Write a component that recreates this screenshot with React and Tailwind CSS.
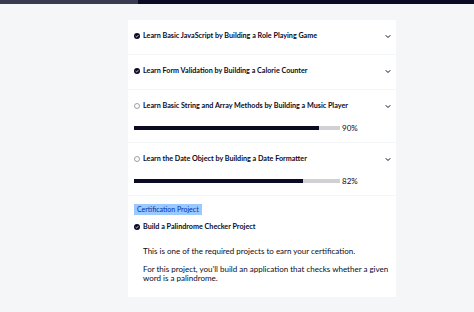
import React from "react";

const Check = () => (
  <svg width="6" height="6" viewBox="0 0 12 12" className="shrink-0">
    <circle cx="6" cy="6" r="6" fill="#0a0a23" />
    <path d="M3.2 6.2 L5.2 8.1 L8.8 4.2" stroke="#fff" strokeWidth="1.6" fill="none" />
  </svg>
);

const Open = () => (
  <svg width="6" height="6" viewBox="0 0 12 12" className="shrink-0">
    <circle cx="6" cy="6" r="5" fill="#fff" stroke="#6b6b78" strokeWidth="1.3" />
  </svg>
);

const Chevron = () => (
  <svg width="6" height="5" viewBox="0 0 12 10" className="shrink-0">
    <path d="M1.5 2.5 L6 7 L10.5 2.5" stroke="#0a0a23" strokeWidth="2" fill="none" />
  </svg>
);

const Row = ({ done, title, pct }) => (
  <div className={`bg-white pl-[6px] pr-[5px] pt-[11px] ${pct ? "pb-[12px]" : "pb-[13px]"}`}>
    <div className="flex items-center h-[10px]">
      {done ? <Check /> : <Open />}
      <span className="ml-[3px] text-[7.2px] leading-[10px] font-bold text-[#0a0a23]">{title}</span>
      <span className="ml-auto flex"><Chevron /></span>
    </div>
    {pct && (
      <div className="mt-[15px] flex items-center h-[4px]">
        <div className="w-[206px] h-[4px] bg-[#d0d0d5]">
          <div className="h-full bg-[#0a0a23]" style={{ width: `${pct}%` }} />
        </div>
        <span className="ml-[2px] text-[8px] leading-[10px] text-[#0a0a23]">{pct}%</span>
      </div>
    )}
  </div>
);

export default function App() {
  return (
    <div className="w-[474px] h-[312px] bg-[#f5f6f7] font-['Lato',sans-serif] overflow-hidden">
      <div className="h-[4px] flex">
        <div className="w-[138px] bg-[#3b3b4f]" />
        <div className="flex-1 bg-[#0a0a23]" />
      </div>
      <div className="ml-[128px] mt-[16px] w-[268px] flex flex-col gap-[1px] bg-[#f5f6f7]">
        <Row done title="Learn Basic JavaScript by Building a Role Playing Game" />
        <Row done title="Learn Form Validation by Building a Calorie Counter" />
        <Row title="Learn Basic String and Array Methods by Building a Music Player" pct={90} />
        <Row title="Learn the Date Object by Building a Date Formatter" pct={82} />
        <div className="bg-white px-[6px] pt-[8px] pb-[14px]">
          <div className="w-fit bg-[#99c9ff] text-[#002ead] text-[7px] px-[3px] h-[11px] leading-[11px]">
            Certification Project
          </div>
          <div className="mt-[7px] flex items-center h-[10px]">
            <Check />
            <span className="ml-[3px] text-[7.2px] leading-[10px] font-bold text-[#0a0a23]">Build a Palindrome Checker Project</span>
          </div>
          <div className="mt-[15px] pl-[9px] text-[8px] text-[#0a0a23] leading-[9px]">
            <p>This is one of the required projects to earn your certification.</p>
            <p className="mt-[9px]">For this project, you'll build an application that checks whether a given word is a palindrome.</p>
          </div>
        </div>
      </div>
    </div>
  );
}
